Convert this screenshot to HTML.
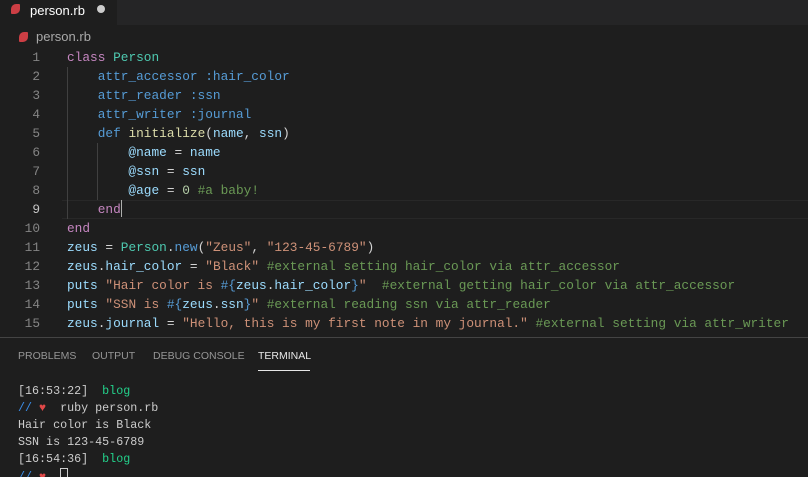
<!DOCTYPE html>
<html><head><meta charset="utf-8"><style>
html,body{margin:0;width:808px;height:477px;overflow:hidden}
body{background:#1e1e1e;font-family:"Liberation Sans",sans-serif;position:relative}
.tabs{position:absolute;left:0;top:0;width:808px;height:25px;background:#252526}
.tab{position:absolute;left:0;top:0;width:117px;height:25px;background:#1e1e1e;color:#fff;font-size:13px}
.rb{position:absolute;width:9px;height:10px;background:#cc3e44;border-radius:5px 1px 5px 1px}
.bc{position:absolute;left:36px;top:29px;color:#a9a9a9;font-size:13px}
.code{position:absolute;left:0;top:48px;font-family:"Liberation Mono",monospace;font-size:12.8px;line-height:19px;white-space:pre}
.ln{position:absolute;left:0;width:40px;text-align:right;color:#858585}
.tx{position:absolute;left:67px;color:#9cdcfe}
.k{color:#c586c0}.c{color:#4ec9b0}.v{color:#569cd6}.s{color:#ce9178}.m{color:#6a9955}.n{color:#b5cea8}.f{color:#dcdcaa}.w{color:#d4d4d4}.i{color:#9cdcfe}
.guide{position:absolute;width:1px;background:#404040}
.panel{position:absolute;left:0;top:337px;width:808px;height:140px;border-top:1px solid #444}
.pt{position:absolute;top:12px;font-size:10.5px;color:#969696}
.term{position:absolute;left:18px;top:45px;font-family:"Liberation Mono",monospace;font-size:11.7px;line-height:17px;color:#ccc;white-space:pre}
.g{color:#23d18b}.b{color:#3b8eea}.r{color:#e04848}
</style></head><body>
<div class="tabs"><div class="tab"><div class="rb" style="left:11px;top:4px"></div><span style="position:absolute;left:30px;top:3px">person.rb</span><span style="position:absolute;left:97px;top:5px;width:8px;height:8px;border-radius:4px;background:#ccc"></span></div></div>
<div class="rb" style="left:19px;top:32px"></div><div class="bc">person.rb</div>
<div style="position:absolute;left:62px;top:200px;width:746px;height:17px;border-top:1px solid #282828;border-bottom:1px solid #282828"></div>
<div class="guide" style="left:67px;top:67px;height:152px"></div>
<div class="guide" style="left:97px;top:143px;height:57px"></div>
<div class="code">
<div class="ln" style="top:0">1</div><div class="tx" style="top:0"><span class="k">class</span> <span class="c">Person</span></div>
<div class="ln" style="top:19px">2</div><div class="tx v" style="top:19px">    attr_accessor :hair_color</div>
<div class="ln" style="top:38px">3</div><div class="tx v" style="top:38px">    attr_reader :ssn</div>
<div class="ln" style="top:57px">4</div><div class="tx v" style="top:57px">    attr_writer :journal</div>
<div class="ln" style="top:76px">5</div><div class="tx" style="top:76px">    <span class="v">def</span> <span class="f">initialize</span><span class="w">(</span>name<span class="w">,</span> ssn<span class="w">)</span></div>
<div class="ln" style="top:95px">6</div><div class="tx" style="top:95px">        @name <span class="w">=</span> name</div>
<div class="ln" style="top:114px">7</div><div class="tx" style="top:114px">        @ssn <span class="w">=</span> ssn</div>
<div class="ln" style="top:133px">8</div><div class="tx" style="top:133px">        @age <span class="w">=</span> <span class="n">0</span> <span class="m">#a baby!</span></div>
<div class="ln" style="top:152px;color:#c6c6c6">9</div><div class="tx" style="top:152px">    <span class="k">end</span><span style="display:inline-block;width:1px;height:17px;background:#aeafad;vertical-align:-4px"></span></div>
<div class="ln" style="top:171px">10</div><div class="tx" style="top:171px"><span class="k">end</span></div>
<div class="ln" style="top:190px">11</div><div class="tx" style="top:190px">zeus <span class="w">=</span> <span class="c">Person</span><span class="w">.</span><span class="v">new</span><span class="w">(</span><span class="s">"Zeus"</span><span class="w">,</span> <span class="s">"123-45-6789"</span><span class="w">)</span></div>
<div class="ln" style="top:209px">12</div><div class="tx" style="top:209px">zeus<span class="w">.</span>hair_color <span class="w">=</span> <span class="s">"Black"</span> <span class="m">#external setting hair_color via attr_accessor</span></div>
<div class="ln" style="top:228px">13</div><div class="tx" style="top:228px">puts <span class="s">"Hair color is </span><span class="v">#{</span>zeus<span class="w">.</span>hair_color<span class="v">}</span><span class="s">"</span>  <span class="m">#external getting hair_color via attr_accessor</span></div>
<div class="ln" style="top:247px">14</div><div class="tx" style="top:247px">puts <span class="s">"SSN is </span><span class="v">#{</span>zeus<span class="w">.</span>ssn<span class="v">}</span><span class="s">"</span> <span class="m">#external reading ssn via attr_reader</span></div>
<div class="ln" style="top:266px">15</div><div class="tx" style="top:266px">zeus<span class="w">.</span>journal <span class="w">=</span> <span class="s">"Hello, this is my first note in my journal."</span> <span class="m">#external setting via attr_writer</span></div>
</div>
<div class="panel">
<span class="pt" style="left:18px">PROBLEMS</span><span class="pt" style="left:92px">OUTPUT</span><span class="pt" style="left:153px">DEBUG CONSOLE</span><span class="pt" style="left:258px;color:#e7e7e7">TERMINAL</span>
<div style="position:absolute;left:258px;top:32px;width:52px;height:1px;background:#e7e7e7"></div>
<div class="term">[16:53:22]  <span class="g">blog</span>
<span class="b">//</span> <span class="r">♥</span>  ruby person.rb
Hair color is Black
SSN is 123-45-6789
[16:54:36]  <span class="g">blog</span>
<span class="b">//</span> <span class="r">♥</span>  <span style="display:inline-block;width:6px;height:12px;border:1px solid #ccc;vertical-align:-2px"></span></div>
</div>
</body></html>
